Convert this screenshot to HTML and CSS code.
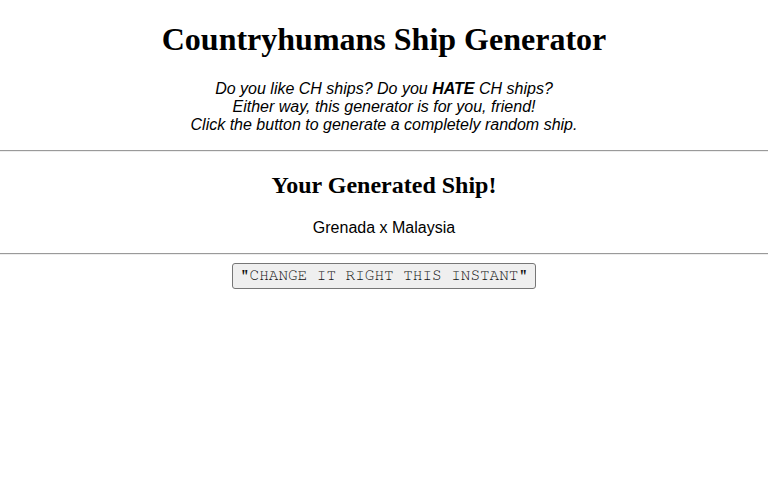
FILE: index.html
```html
<!DOCTYPE html>
<html lang="en">
<head>
<meta charset="utf-8">
<title>Countryhumans Ship Generator</title>
<link rel="stylesheet" href="styles.css">
</head>
<body>
  <h1 class="title">Countryhumans Ship Generator</h1>
  <p class="intro"><i>Do you like CH ships? Do you <b>HATE</b> CH ships?<br>Either way, this generator is for you, friend!<br>Click the button to generate a completely random ship.</i></p>
  <hr class="rule">
  <h2 class="result-heading">Your Generated Ship!</h2>
  <p class="result">Grenada x Malaysia</p>
  <hr class="rule">
  <div class="actions">
    <button class="generate" type="button">"CHANGE IT RIGHT THIS INSTANT"</button>
  </div>
</body>
</html>
```
FILE: styles.css
```css
body {
  margin: 0;
  background: #ffffff;
  color: #000000;
  font-family: "Liberation Serif", serif;
}

.title {
  font-size: 32px;
  font-weight: bold;
  text-align: center;
  margin: 21.44px 0;
}

.intro,
.result {
  font-family: "Liberation Sans", Arial, sans-serif;
  font-size: 16px;
  line-height: 18px;
  text-align: center;
  margin: 16px 0;
}

.rule {
  margin: 8px 0;
  border: none;
  border-top: 1px solid #9a9a9a;
  border-bottom: 1px solid #eeeeee;
  height: 0;
}

.result-heading {
  font-size: 24px;
  font-weight: bold;
  text-align: center;
  margin: 19.92px 0;
}

.actions {
  text-align: center;
}

.generate {
  font-family: "Nimbus Mono PS", "Nimbus Mono L", FreeMono, Courier, "Liberation Mono", monospace;
  font-size: 16px;
  line-height: 19px;
  color: #111111;
  background: #efefef;
  border: 1px solid #767676;
  border-radius: 3px;
  padding: 2px 7px 3px;
}
```
